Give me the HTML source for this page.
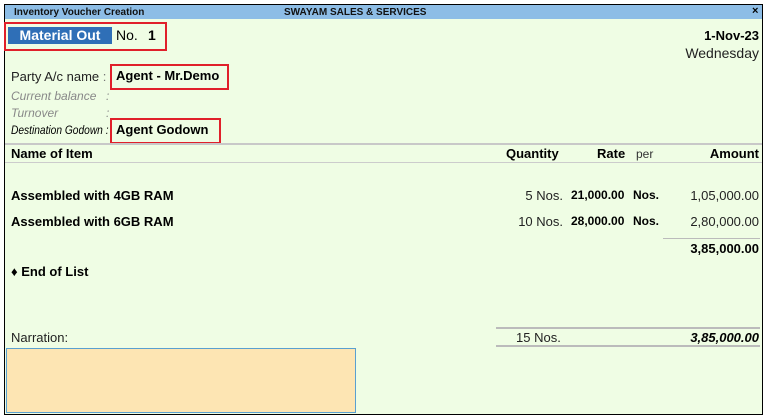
<!DOCTYPE html>
<html><head><meta charset="utf-8"><style>
body{margin:0;width:768px;height:417px;background:#fff;font-family:"Liberation Sans",Arial,sans-serif;position:relative;overflow:hidden}
.a{position:absolute;white-space:nowrap}
#f{position:absolute;left:4px;top:4px;width:757px;height:409px;border:1px solid #000;background:#effde4}
.b{font-weight:bold}
.r{text-align:right}
.g{color:#888;font-style:italic;font-size:12px}
.red{position:absolute;border:2px solid #e0202a}
.hl{position:absolute;height:1px;background:#bbb}
</style></head><body>
<div id="f"></div>
<div class="a" style="left:5px;top:5px;width:757px;height:14px;background:#8dbde6"></div>
<div class="a b" style="left:14px;top:7px;font-size:10px;color:#111">Inventory Voucher Creation</div>
<div class="a b" style="left:284px;top:7px;font-size:10px;color:#111">SWAYAM SALES &amp; SERVICES</div>
<div class="a b" style="left:752px;top:5px;font-size:11px">×</div>

<div class="red" style="left:4px;top:22px;width:159px;height:25px"></div>
<div class="a b" style="left:8px;top:27px;width:104px;height:17px;background:#2f6fb7;color:#fff;font-size:14px;line-height:17px;text-align:center">Material Out</div>
<div class="a" style="left:116px;top:27px;font-size:14px">No.</div>
<div class="a b" style="left:148px;top:27px;font-size:14px">1</div>

<div class="a b r" style="right:9px;top:28px;font-size:13px">1-Nov-23</div>
<div class="a r" style="right:9px;top:45px;font-size:14px;color:#222">Wednesday</div>

<div class="a" style="left:11px;top:69px;font-size:13px;color:#222">Party A/c name <span style="color:#777">:</span></div>
<div class="red" style="left:110px;top:64px;width:115px;height:22px"></div>
<div class="a b" style="left:116px;top:68px;font-size:13px">Agent - Mr.Demo</div>
<div class="a g" style="left:11px;top:89px">Current balance</div>
<div class="a g" style="left:106px;top:89px">:</div>
<div class="a g" style="left:11px;top:106px">Turnover</div>
<div class="a g" style="left:106px;top:106px">:</div>
<div class="a" style="left:11px;top:123px;font-size:12px;font-style:italic;transform:scaleX(.85);transform-origin:left">Destination Godown :</div>
<div class="red" style="left:110px;top:118px;width:107px;height:22px"></div>
<div class="a b" style="left:116px;top:122px;font-size:13px">Agent Godown</div>

<div class="hl" style="left:5px;top:143px;width:757px;height:2px;background:#c8c8c8"></div>
<div class="a b" style="left:506px;top:146px;font-size:13px">Quantity</div>
<div class="a b" style="left:11px;top:146px;font-size:13px">Name of Item</div>
<div class="a b" style="left:597px;top:146px;font-size:13px">Rate</div>
<div class="a" style="left:636px;top:147px;font-size:12px;color:#333">per</div>
<div class="a b r" style="right:9px;top:146px;font-size:13px">Amount</div>
<div class="hl" style="left:5px;top:162px;width:757px;background:#ccc"></div>

<div class="a b" style="left:11px;top:188px;font-size:13px">Assembled with 4GB RAM</div>
<div class="a r" style="right:205px;top:188px;font-size:13px;color:#222">5 Nos.</div>
<div class="a b" style="left:571px;top:188px;font-size:12px">21,000.00</div>
<div class="a b" style="left:633px;top:188px;font-size:12px">Nos.</div>
<div class="a r" style="right:9px;top:188px;font-size:13px;color:#222">1,05,000.00</div>

<div class="a b" style="left:11px;top:214px;font-size:13px">Assembled with 6GB RAM</div>
<div class="a r" style="right:205px;top:214px;font-size:13px;color:#222">10 Nos.</div>
<div class="a b" style="left:571px;top:214px;font-size:12px">28,000.00</div>
<div class="a b" style="left:633px;top:214px;font-size:12px">Nos.</div>
<div class="a r" style="right:9px;top:214px;font-size:13px;color:#222">2,80,000.00</div>

<div class="hl" style="left:663px;top:238px;width:97px"></div>
<div class="a b r" style="right:9px;top:241px;font-size:13px">3,85,000.00</div>

<div class="a b" style="left:11px;top:264px;font-size:13px">♦ End of List</div>

<div class="hl" style="left:496px;top:327px;width:264px;height:2px"></div>
<div class="a" style="left:11px;top:330px;font-size:13px;color:#222">Narration:</div>
<div class="a" style="left:516px;top:330px;font-size:13px;color:#222">15 Nos.</div>
<div class="a b r" style="right:9px;top:330px;font-size:13px;font-style:italic">3,85,000.00</div>
<div class="hl" style="left:496px;top:345px;width:264px;height:2px"></div>

<div class="a" style="left:6px;top:348px;width:348px;height:63px;background:#fde5b3;border:1px solid #5aa0d0"></div>
</body></html>
